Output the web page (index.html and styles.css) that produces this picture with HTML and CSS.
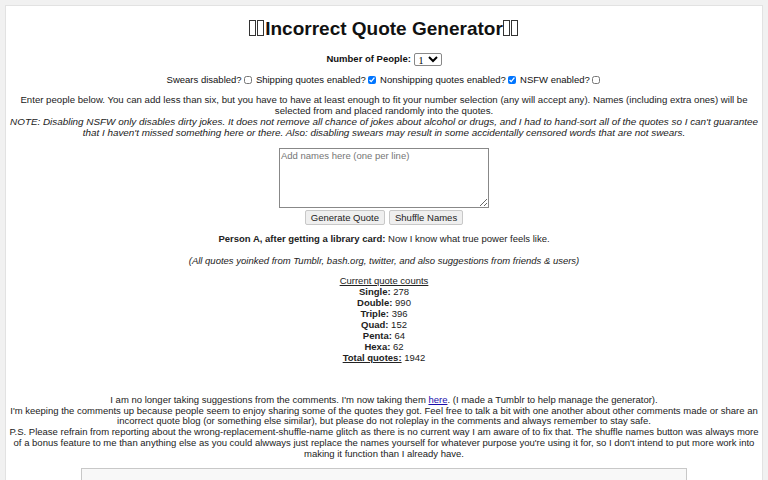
FILE: index.html
```html
<!DOCTYPE html>
<html lang="en">
<head>
    <meta charset="UTF-8">
    <meta name="viewport" content="width=device-width, initial-scale=1.0">
    <title>Incorrect Quote Generator</title>
    <link rel="stylesheet" href="styles.css">
</head>
<body>
    <div class="page">
        <h1><span class="tofu"></span><span class="tofu"></span>Incorrect Quote Generator<span class="tofu"></span><span class="tofu"></span></h1>

        <div class="row people">
            <label for="people"><b>Number of People:</b></label>
            <select id="people">
                <option>1</option>
                <option>2</option>
                <option>3</option>
                <option>4</option>
                <option>5</option>
                <option>6</option>
            </select>
        </div>

        <div class="row options">
            <label>Swears disabled? <input type="checkbox"></label>
            <label>Shipping quotes enabled? <input type="checkbox" checked></label>
            <label>Nonshipping quotes enabled? <input type="checkbox" checked></label>
            <label>NSFW enabled? <input type="checkbox"></label>
        </div>

        <p class="intro">
            Enter people below. You can add less than six, but you have to have at least enough to fit your number selection (any will accept any). Names (including extra ones) will be selected from and placed randomly into the quotes.<br>
            <i>NOTE: Disabling NSFW only disables dirty jokes. It does not remove all chance of jokes about alcohol or drugs, and I had to hand-sort all of the quotes so I can't guarantee that I haven't missed something here or there. Also: disabling swears may result in some accidentally censored words that are not swears.</i>
        </p>

        <div class="names">
            <textarea id="names" placeholder="Add names here (one per line)"></textarea>
        </div>
        <div class="actions">
            <button>Generate Quote</button>
            <button>Shuffle Names</button>
        </div>

        <p class="quote"><b>Person A, after getting a library card:</b> Now I know what true power feels like.</p>

        <p class="credit"><i>(All quotes yoinked from Tumblr, bash.org, twitter, and also suggestions from friends &amp; users)</i></p>

        <div class="counts">
            <u>Current quote counts</u><br>
            <b>Single:</b> 278<br>
            <b>Double:</b> 990<br>
            <b>Triple:</b> 396<br>
            <b>Quad:</b> 152<br>
            <b>Penta:</b> 64<br>
            <b>Hexa:</b> 62<br>
            <b><u>Total quotes:</u></b> 1942
        </div>

        <p class="notice">
            I am no longer taking suggestions from the comments. I'm now taking them <a href="#">here</a>. (I made a Tumblr to help manage the generator).<br>
            I'm keeping the comments up because people seem to enjoy sharing some of the quotes they got. Feel free to talk a bit with one another about other comments made or share an incorrect quote blog (or something else similar), but please do not roleplay in the comments and always remember to stay safe.<br>
            P.S. Please refrain from reporting about the wrong-replacement-shuffle-name glitch as there is no current way I am aware of to fix that. The shuffle names button was always more of a bonus feature to me than anything else as you could alwways just replace the names yourself for whatever purpose you're using it for, so I don't intend to put more work into making it function than I already have.
        </p>

        <div class="comments"></div>
    </div>
</body>
</html>
```

FILE: styles.css
```css
body {
    margin: 0;
    padding: 5px 5px 0;
    background: #f1f1f1;
    font-family: "Liberation Sans", Arial, sans-serif;
    font-size: 9.5px;
    line-height: 10.9px;
    color: #222;
}
.page {
    background: white;
    border: 1px solid #e2e2e2;
    padding: 0 2px;
    text-align: center;
    min-height: 480px;
}
h1 {
    font-size: 19px;
    line-height: 24px;
    margin: 0;
    padding: 11px 0 12px;
    color: #111;
}
.tofu {
    display: inline-block;
    width: 5px;
    height: 14px;
    border: 1px solid #333;
    margin-right: 1px;
    vertical-align: -1px;
}
.row {
    margin-bottom: 8px;
}
.people {
    margin-bottom: 9px;
}
.row label {
    color: #111;
}
select {
    font-family: "Liberation Serif", serif;
    font-size: 10px;
    width: 28px;
    height: 13px;
    padding: 0;
    border: 1px solid #888;
    border-radius: 2px;
    background: white;
    vertical-align: middle;
}
.options input {
    margin: 0 1px 0 0;
    width: 8px;
    height: 8px;
    vertical-align: -1px;
}
.intro {
    font-size: 9.65px;
    margin: 9px 0 9px;
}
.intro i {
    font-size: 9.9px;
}
.names textarea {
    width: 210px;
    height: 60px;
    box-sizing: border-box;
    font-family: "Liberation Sans", Arial, sans-serif;
    font-size: 9.5px;
    border: 1px solid #888;
    padding: 1px;
    display: block;
    margin: 0 auto;
}
.actions {
    display: flex;
    justify-content: center;
    gap: 4px;
    margin-top: 2px;
}
button {
    font-family: "Liberation Sans", Arial, sans-serif;
    font-size: 9.5px;
    padding: 1px 5px;
    height: 15px;
    background: #efefef;
    border: 1px solid #c8c8c8;
    border-radius: 2px;
    color: #222;
}
.quote {
    margin: 9px 0 0;
}
.credit {
    margin: 12px 0 0;
}
.counts {
    margin-top: 9px;
}
.notice {
    margin: 31px 0 0;
}
.comments {
    width: 604px;
    height: 40px;
    margin: 8px auto 0;
    border: 1px solid #c8c8c8;
    background: #f8f8f8;
}
a {
    color: #1a0dab;
}
```
